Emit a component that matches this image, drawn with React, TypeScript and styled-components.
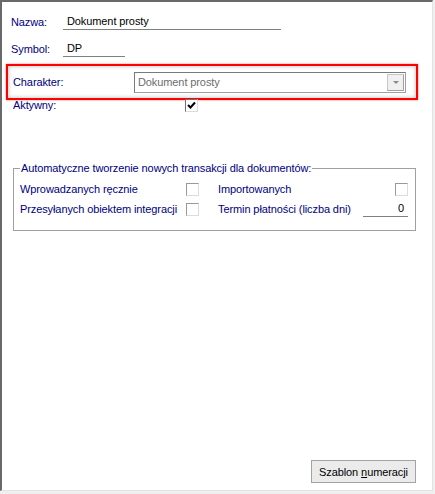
import React from "react";
import styled, {createGlobalStyle} from "styled-components";

const GlobalStyle = createGlobalStyle`
	html, body {
		margin: 0;
		padding: 0;
		background: #f0f0f0;
	}
	body {
		font-family: "Liberation Sans", Arial, sans-serif;
		font-size: 11px;
		letter-spacing: -0.1px;
	}
`;

const Panel = styled.div`
	box-sizing: border-box;
	width: 433px;
	height: 491px;
	background: #fff;
	border-left: 2px solid #696969;
	border-top: 2px solid #696969;
	border-right: 1px solid #e3e3e3;
	border-bottom: 1px solid #e3e3e3;
	display: flex;
	flex-direction: column;
	padding-top: 10px;
`;

const FieldRow = styled.div<{ $top?: number }>`
	display: grid;
	grid-template-columns: 52px auto;
	align-items: center;
	height: 20px;
	margin-left: 9px;
	margin-top: ${p => p.$top || 0}px;
`;

const Label = styled.span`
	color: #000080;
	white-space: nowrap;
`;

const LineField = styled.div<{ $width: number; $align?: string }>`
	box-sizing: border-box;
	width: ${p => p.$width}px;
	height: 16px;
	line-height: 15px;
	padding: 0 4px;
	border-bottom: 1px solid #808080;
	color: #000;
	text-align: ${p => p.$align || "left"};
`;

const Highlight = styled.div`
	box-sizing: border-box;
	width: 412px;
	height: 36px;
	margin: 5px 0 0 4px;
	border: 2px solid #ff0000;
	box-shadow: inset 0 0 4px rgba(0, 0, 0, 0.28), 0 0 2px rgba(255, 0, 0, 0.5);
	display: grid;
	grid-template-columns: 121px 272px;
	align-items: center;
	padding-left: 5px;
`;

const Combo = styled.div`
	box-sizing: border-box;
	height: 21px;
	border: 1px solid #a0a0a0;
	border-top-color: #7a7a7a;
	border-left-color: #7a7a7a;
	background: #fff;
	display: flex;
	align-items: center;
	justify-content: space-between;
	padding: 0 1px 0 3px;
	color: #6d6d6d;
`;

const ComboButton = styled.div`
	box-sizing: border-box;
	width: 17px;
	height: 17px;
	background: #f0f0f0;
	border: 1px solid #c8c8c8;
	border-right-color: #a0a0a0;
	border-bottom-color: #a0a0a0;
	display: flex;
	align-items: center;
	justify-content: center;
`;

const Arrow = styled.div`
	width: 0;
	height: 0;
	border-left: 3px solid transparent;
	border-right: 3px solid transparent;
	border-top: 3px solid #8a8a8a;
`;

const CheckRow = styled.div`
	display: grid;
	grid-template-columns: 172px 13px;
	align-items: center;
	height: 16px;
	margin: -3px 0 0 11px;
`;

const Box = styled.div<{ $dark?: boolean }>`
	box-sizing: border-box;
	width: 13px;
	height: 13px;
	background: #fff;
	border: 1px solid #dcdcdc;
	border-top-color: ${p => p.$dark ? "#707070" : "#999"};
	border-left-color: ${p => p.$dark ? "#707070" : "#999"};
	display: flex;
	align-items: center;
	justify-content: center;
`;

const Group = styled.fieldset`
	box-sizing: border-box;
	width: 403px;
	height: 69px;
	margin: 49px 0 0 11px;
	padding: 4px 0 0 6px;
	border: 1px solid #a0a0a0;
	min-width: 0;
`;

const Legend = styled.legend`
	color: #000080;
	padding: 0 1px;
	margin-left: 0;
	line-height: 13px;
`;

const GroupRow = styled.div`
	display: grid;
	grid-template-columns: 166px 13px 19px 190px;
	align-items: center;
	height: 20px;
`;

const SubCell = styled.div`
	display: flex;
	align-items: center;
	justify-content: space-between;
`;

const Footer = styled.div`
	margin-top: auto;
	display: flex;
	justify-content: flex-end;
	padding: 0 16px 7px 0;
`;

const Button = styled.button`
	box-sizing: border-box;
	width: 105px;
	height: 23px;
	background: #ebebeb;
	border: 1px solid #a3a3a3;
	font-family: inherit;
	font-size: 11px;
	letter-spacing: inherit;
	color: #000;
	padding: 0;
	u {
		text-decoration: underline;
	}
`;

const Check = () => (
	<svg width="9" height="9" viewBox="0 0 9 9">
		<path d="M1 4 L3.5 6.5 L8 1.5" fill="none" stroke="#000" strokeWidth="2"/>
	</svg>
);

export default function App() {
	return (
		<>
			<GlobalStyle/>
			<Panel>
				<FieldRow>
					<Label>Nazwa:</Label>
					<LineField $width={218}>Dokument prosty</LineField>
				</FieldRow>
				<FieldRow $top={7}>
					<Label>Symbol:</Label>
					<LineField $width={62}>DP</LineField>
				</FieldRow>
				<Highlight>
					<Label>Charakter:</Label>
					<Combo>
						<span>Dokument prosty</span>
						<ComboButton><Arrow/></ComboButton>
					</Combo>
				</Highlight>
				<CheckRow>
					<Label>Aktywny:</Label>
					<Box $dark><Check/></Box>
				</CheckRow>
				<Group>
					<Legend>Automatyczne tworzenie nowych transakcji dla dokumentów:</Legend>
					<GroupRow>
						<Label>Wprowadzanych ręcznie</Label>
						<Box/>
						<span/>
						<SubCell>
							<Label>Importowanych</Label>
							<Box/>
						</SubCell>
					</GroupRow>
					<GroupRow>
						<Label>Przesyłanych obiektem integracji</Label>
						<Box/>
						<span/>
						<SubCell>
							<Label>Termin płatności (liczba dni)</Label>
							<LineField $width={45} $align="right">0</LineField>
						</SubCell>
					</GroupRow>
				</Group>
				<Footer>
					<Button>Szablon <u>n</u>umeracji</Button>
				</Footer>
			</Panel>
		</>
	);
}
